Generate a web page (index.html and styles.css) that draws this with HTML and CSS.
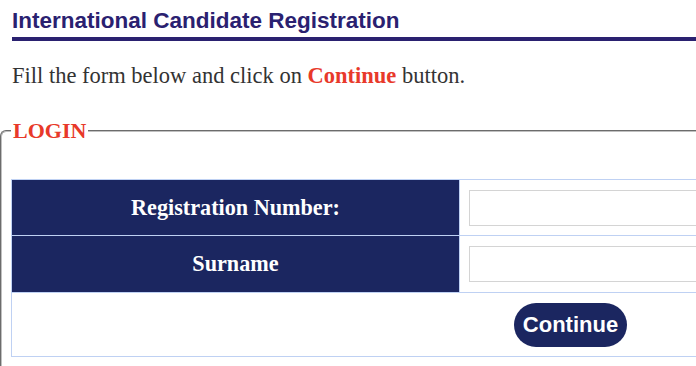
FILE: index.html
```html
<!DOCTYPE html>
<html>
<head>
<meta charset="utf-8">
<link rel="stylesheet" href="styles.css">
</head>
<body>
<div class="page">
  <h1 class="title">International Candidate Registration</h1>
  <p class="intro">Fill the form below and click on <strong class="accent">Continue</strong> button.</p>
  <fieldset class="login">
    <legend class="login-legend">LOGIN</legend>
    <div class="form-grid">
      <label class="label-cell" for="regno">Registration Number:</label>
      <div class="input-cell"><input class="text-input" id="regno" type="text"></div>
      <label class="label-cell" for="surname">Surname</label>
      <div class="input-cell"><input class="text-input" id="surname" type="text"></div>
      <div class="action-cell"><button class="btn-continue" type="button">Continue</button></div>
    </div>
  </fieldset>
</div>
</body>
</html>
```
FILE: styles.css
```css
html, body {
  margin: 0;
  padding: 0;
  overflow: hidden;
  background: #ffffff;
}
.page {
  width: 1200px;
}
.title {
  margin: 8px 0 0 12px;
  padding-bottom: 4px;
  border-bottom: 4px solid #2a2170;
  font-family: "Liberation Sans", Arial, sans-serif;
  font-size: 22.5px;
  line-height: 25px;
  font-weight: bold;
  color: #2a2170;
}
.intro {
  margin: 22px 0 0 12px;
  font-family: "Liberation Serif", "Times New Roman", serif;
  font-size: 22.5px;
  line-height: 25px;
  color: #333333;
}
.accent {
  color: #e8392a;
}
.login {
  margin: 30px 0 0 0;
  padding: 36px 9px 30px 9px;
  border: 2px groove #c0c0c0;
  border-radius: 6px;
  width: 1140px;
}
.login-legend {
  padding: 0 2px;
  font-family: "Liberation Serif", "Times New Roman", serif;
  font-size: 22px;
  line-height: 25px;
  font-weight: bold;
  color: #e8392a;
}
.form-grid {
  display: grid;
  grid-template-columns: 447px 1fr;
  grid-template-rows: 55px 56px 63px;
  gap: 1px;
  padding: 1px;
  width: 1121px;
  background: #bfd1f3;
}
.label-cell {
  display: flex;
  align-items: center;
  justify-content: center;
  background: #1b2660;
  color: #ffffff;
  font-family: "Liberation Serif", "Times New Roman", serif;
  font-size: 22.2px;
  font-weight: bold;
}
.input-cell {
  display: flex;
  align-items: center;
  padding-left: 9px;
  background: #ffffff;
}
.text-input {
  box-sizing: border-box;
  width: 420px;
  height: 36px;
  margin: 0;
  border: 1px solid #d4d4d4;
  background: #ffffff;
}
.action-cell {
  grid-column: 1 / 3;
  display: flex;
  align-items: center;
  justify-content: center;
  padding-right: 4px;
  background: #ffffff;
}
.btn-continue {
  width: 113px;
  height: 44px;
  border: none;
  border-radius: 22px;
  background: #1b2660;
  color: #ffffff;
  font-family: "Liberation Sans", Arial, sans-serif;
  font-size: 22px;
  font-weight: bold;
  padding: 0;
}
```
